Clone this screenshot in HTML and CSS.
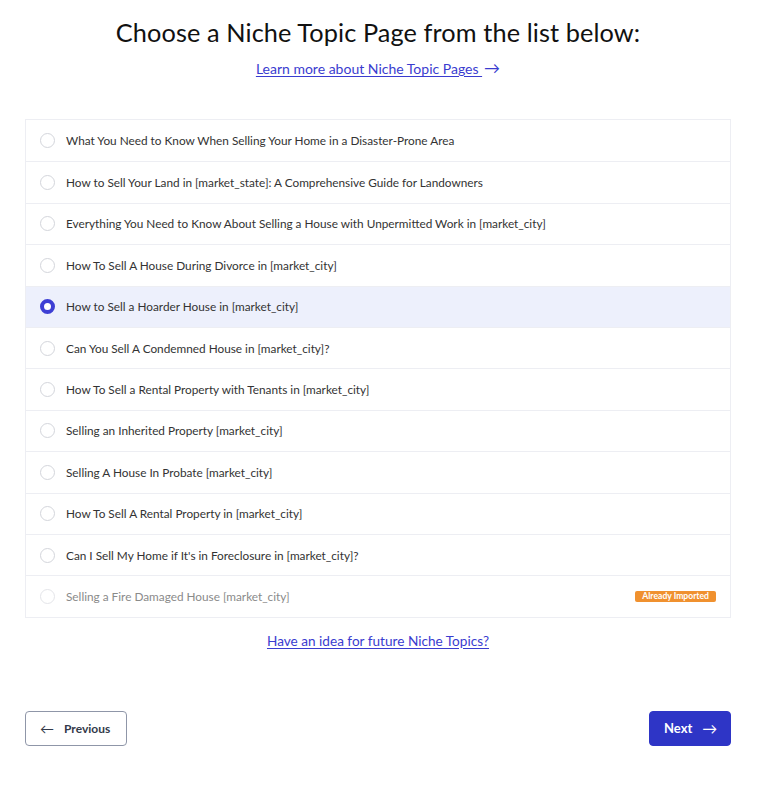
FILE: index.html
```html
<!DOCTYPE html>
<html lang="en">
<head>
<meta charset="utf-8">
<title>Choose a Niche Topic Page</title>
<link rel="stylesheet" href="styles.css">
</head>
<body>
<div class="page">
  <h1 class="title">Choose a Niche Topic Page from the list below:</h1>
  <div class="learn"><a href="#" class="learn-link">Learn more about Niche Topic Pages </a><span class="learn-arrow">&rarr;</span></div>

  <ul class="list">
    <li class="row"><span class="radio"></span><span class="label">What You Need to Know When Selling Your Home in a Disaster-Prone Area</span></li>
    <li class="row"><span class="radio"></span><span class="label">How to Sell Your Land in [market_state]: A Comprehensive Guide for Landowners</span></li>
    <li class="row"><span class="radio"></span><span class="label">Everything You Need to Know About Selling a House with Unpermitted Work in [market_city]</span></li>
    <li class="row"><span class="radio"></span><span class="label">How To Sell A House During Divorce in [market_city]</span></li>
    <li class="row selected"><span class="radio checked"></span><span class="label">How to Sell a Hoarder House in [market_city]</span></li>
    <li class="row"><span class="radio"></span><span class="label">Can You Sell A Condemned House in [market_city]?</span></li>
    <li class="row"><span class="radio"></span><span class="label">How To Sell a Rental Property with Tenants in [market_city]</span></li>
    <li class="row"><span class="radio"></span><span class="label">Selling an Inherited Property [market_city]</span></li>
    <li class="row"><span class="radio"></span><span class="label">Selling A House In Probate [market_city]</span></li>
    <li class="row"><span class="radio"></span><span class="label">How To Sell A Rental Property in [market_city]</span></li>
    <li class="row"><span class="radio"></span><span class="label">Can I Sell My Home if It's in Foreclosure in [market_city]?</span></li>
    <li class="row disabled"><span class="radio"></span><span class="label">Selling a Fire Damaged House [market_city]</span><span class="badge">Already Imported</span></li>
  </ul>

  <div class="idea"><a href="#" class="idea-link">Have an idea for future Niche Topics?</a></div>

  <div class="nav">
    <button class="btn btn-prev"><span class="btn-arrow">&larr;</span>Previous</button>
    <button class="btn btn-next">Next<span class="btn-arrow">&rarr;</span></button>
  </div>
</div>
</body>
</html>
```
FILE: styles.css
```css
* { box-sizing: border-box; }
html, body { margin: 0; padding: 0; background: #fff; }
body { font-family: Lato, "Noto Sans", Arial, sans-serif; color: #222; }
.page { width: 756px; padding: 17px 25px 0 25px; }
.title { margin: 0; text-align: center; font-size: 25.3px; font-weight: 400; line-height: 30px; color: #111; letter-spacing: 0.1px; }
.learn { text-align: center; margin-top: 12px; font-size: 14px; line-height: 18px; }
.learn-link { color: #3a3ccf; text-decoration: underline; text-underline-offset: 2px; }
.learn-arrow { color: #3a3ccf; font-size: 16px; margin-left: 2px; }
.list { list-style: none; margin: 41px 0 0 0; padding: 0; border: 1px solid #edeef3; }
.row { display: flex; align-items: center; height: 41.4px; padding: 0 14px; border-top: 1px solid #edeef3; font-size: 11.8px; color: #333; }
.row:first-child { border-top: none; }
.row.selected { background: #edf0fc; }
.row.disabled { color: #8a8a8a; }
.radio { width: 15px; height: 15px; border-radius: 50%; border: 1px solid #d3d5db; background: #fff; margin-right: 11px; flex: none; }
.radio.checked { border: 4.5px solid #3e3fd4; background: #fff; }
.row.disabled .radio { border-color: #e4e5e9; }
.label { flex: 1; }
.badge { background: #f0912f; color: #fff; font-size: 8.6px; font-weight: 700; padding: 1px 7px; border-radius: 2px; line-height: 9px; }
.idea { text-align: center; margin-top: 14px; font-size: 13.6px; line-height: 18px; }
.idea-link { color: #3a3ccf; text-decoration: underline; text-underline-offset: 2px; }
.nav { display: flex; justify-content: space-between; margin-top: 61px; }
.btn { font-family: inherit; font-size: 12px; font-weight: 700; height: 35px; border-radius: 4px; display: flex; align-items: center; cursor: pointer; }
.btn-prev { background: #fff; color: #333a4a; border: 1px solid #8f96a8; width: 102px; padding: 0 0 0 14px; }
.btn-prev .btn-arrow { margin-right: 10px; font-size: 14px; font-weight: 400; }
.btn-next { background: #2e35c6; color: #fff; border: 1px solid #2e35c6; width: 82px; padding: 0 0 0 14px; font-size: 13px; }
.btn-next .btn-arrow { margin-left: 10px; font-size: 15px; font-weight: 400; }
```
